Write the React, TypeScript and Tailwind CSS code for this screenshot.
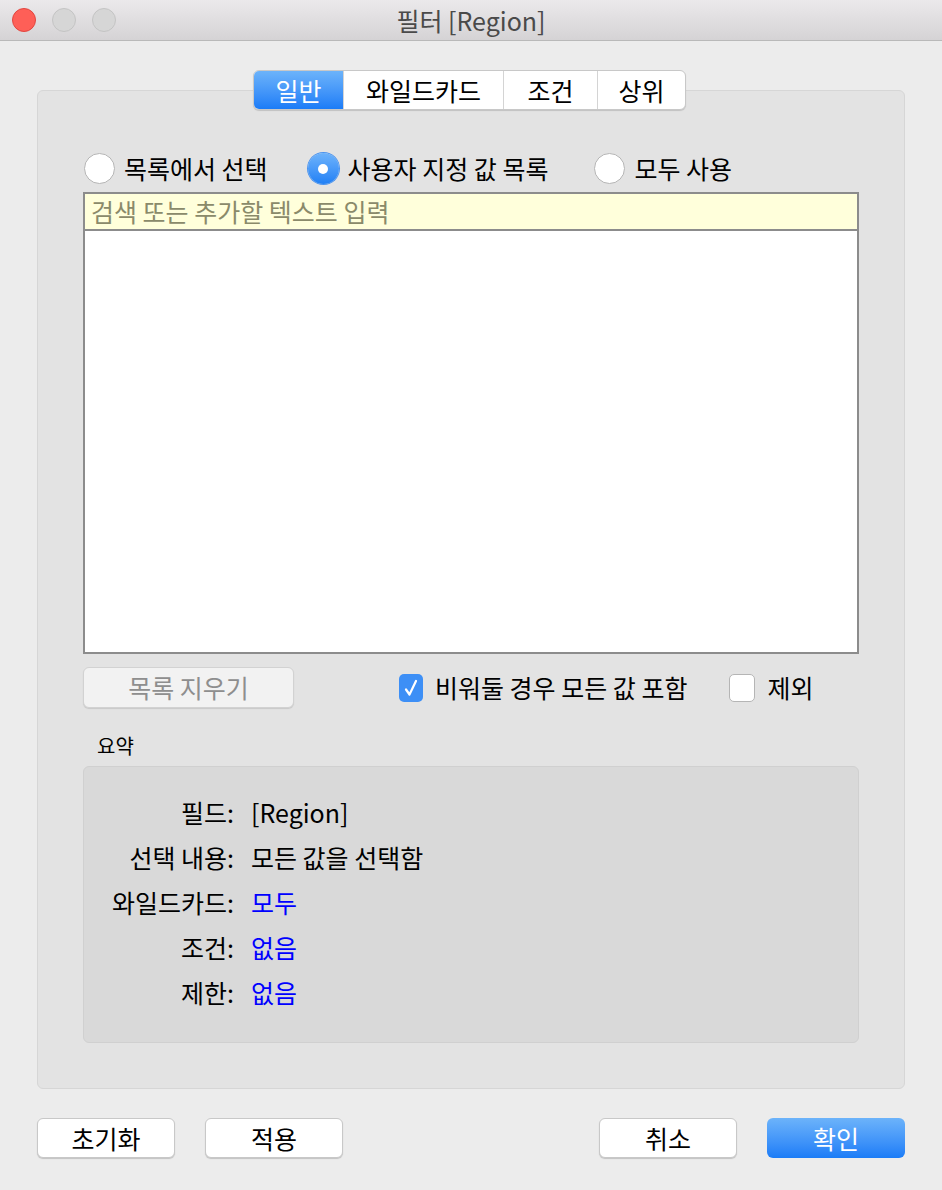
import { useState } from 'react';

const FONT = { fontFamily: '"Noto Sans CJK KR", "Noto Sans", sans-serif' };

const TABS = ['일반', '와일드카드', '조건', '상위'];

const SUMMARY: { label: string; value: string; blue?: boolean }[] = [
  { label: '필드:', value: '[Region]' },
  { label: '선택 내용:', value: '모든 값을 선택함' },
  { label: '와일드카드:', value: '모두', blue: true },
  { label: '조건:', value: '없음', blue: true },
  { label: '제한:', value: '없음', blue: true },
];

function Radio({ checked, label }: { checked?: boolean; label: string }) {
  return (
    <label className="flex items-center gap-[9px] cursor-default">
      {checked ? (
        <span className="flex h-[31px] w-[31px] items-center justify-center rounded-full bg-gradient-to-b from-[#6db3fb] to-[#1f80f5] shadow-[0_0_0_1px_#4a93ef]">
          <span className="h-[10px] w-[10px] rounded-full bg-white" />
        </span>
      ) : (
        <span className="h-[31px] w-[31px] rounded-full border border-[#b5b5b5] bg-white" />
      )}
      <span className="leading-none">{label}</span>
    </label>
  );
}

function Checkbox({ checked, label }: { checked?: boolean; label: string }) {
  return (
    <label className="flex items-center gap-[12px] cursor-default">
      {checked ? (
        <span className="flex h-[28px] w-[24px] items-center justify-center rounded-[5px] bg-[#3d8ff6]">
          <svg width="14" height="18" viewBox="0 0 14 18" fill="none">
            <path d="M2 10.5 L5.5 15.5 L12 2" stroke="white" strokeWidth="2.2" strokeLinecap="round" strokeLinejoin="round" />
          </svg>
        </span>
      ) : (
        <span className="h-[28px] w-[26px] rounded-[5px] border border-[#b5b5b5] bg-white" />
      )}
      <span className="leading-none">{label}</span>
    </label>
  );
}

function DialogButton({ label, primary }: { label: string; primary?: boolean }) {
  return (
    <button
      className={`h-[40px] w-[138px] rounded-[6px] text-[25px] leading-none ${
        primary
          ? 'bg-gradient-to-b from-[#6cb3fa] to-[#1a7cf7] text-white'
          : 'border border-[#c8c8c8] bg-white text-black shadow-[0_1px_1px_rgba(0,0,0,0.18)]'
      }`}
    >
      {label}
    </button>
  );
}

export default function App() {
  const [tab, setTab] = useState(0);

  return (
    <div className="flex h-[1190px] w-[942px] flex-col bg-[#ececec] text-[25px] text-black" style={FONT}>
      {/* title bar */}
      <div className="relative flex h-[41px] items-center justify-center border-b border-[#b9b9b9] bg-gradient-to-b from-[#ebe9eb] to-[#d5d3d5]">
        <div className="absolute left-[12px] top-[8px] flex gap-[16px]">
          <span className="h-[24px] w-[24px] rounded-full border border-[#e2463f] bg-[#fe5f57]" />
          <span className="h-[24px] w-[24px] rounded-full border border-[#c4c4c4] bg-[#d6d6d6]" />
          <span className="h-[24px] w-[24px] rounded-full border border-[#c4c4c4] bg-[#d6d6d6]" />
        </div>
        <span className="text-[25px] leading-none text-[#4a4a4a]">필터 [Region]</span>
      </div>

      {/* group box */}
      <div className="relative mx-[37px] mt-[49px] flex h-[999px] flex-col rounded-[6px] border border-[#d6d6d6] bg-[#e3e3e3] px-[45px]">
        <div className="absolute left-[215px] top-[-21px] flex h-[40px] overflow-hidden rounded-[6px] border border-[#c8c8c8] bg-white shadow-[0_1px_1px_rgba(0,0,0,0.15)]">
          {TABS.map((t, i) => (
            <button
              key={t}
              onClick={() => setTab(i)}
              className={`flex h-full items-center justify-center text-[25px] leading-none ${
                i > 0 ? 'border-l border-[#d4d4d4]' : ''
              } ${tab === i ? 'bg-gradient-to-b from-[#6cb3fa] to-[#1a7cf7] text-white' : 'text-black'} ${
                i === 0 ? 'w-[89px]' : i === 1 ? 'w-[160px]' : i === 2 ? 'w-[94px]' : 'w-[88px]'
              }`}
            >
              {t}
            </button>
          ))}
        </div>

        <div className="mt-[61px] flex h-[33px] items-center pl-[1px]">
          <Radio label="목록에서 선택" />
          <div className="ml-[40px]">
            <Radio checked label="사용자 지정 값 목록" />
          </div>
          <div className="ml-[46px]">
            <Radio label="모두 사용" />
          </div>
        </div>

        <div className="mt-[7px] flex h-[462px] flex-col border-2 border-[#8c8c8c] bg-white">
          <div className="flex h-[37px] items-center border-b-2 border-[#8c8c8c] bg-[#ffffdb] px-[6px] leading-none text-[#8a8a6a]">
            검색 또는 추가할 텍스트 입력
          </div>
          <div className="flex-1" />
        </div>

        <div className="mt-[13px] flex items-center">
          <button className="h-[41px] w-[211px] rounded-[6px] border border-[#d2d2d2] bg-[#f2f2f2] text-[25px] leading-none text-[#8e8e8e] shadow-[0_1px_1px_rgba(0,0,0,0.12)]">
            목록 지우기
          </button>
          <div className="ml-[105px]">
            <Checkbox checked label="비워둘 경우 모든 값 포함" />
          </div>
          <div className="ml-[42px]">
            <Checkbox label="제외" />
          </div>
        </div>

        <div className="mt-[26px] pl-[14px] text-[20px] leading-[24px]">요약</div>

        <div className="mt-[8px] flex h-[277px] flex-col gap-[13px] rounded-[6px] border border-[#d0d0d0] bg-[#d9d9d9] pt-[29px]">
          {SUMMARY.map((r) => (
            <div key={r.label} className="flex h-[32px] items-center leading-none">
              <span className="w-[150px] text-right">{r.label}</span>
              <span className={`ml-[17px] ${r.blue ? 'text-[#0000ff]' : ''}`}>{r.value}</span>
            </div>
          ))}
        </div>
      </div>

      {/* dialog buttons */}
      <div className="mx-[37px] mt-[29px] flex gap-[30px]">
        <DialogButton label="초기화" />
        <DialogButton label="적용" />
        <div className="flex-1" />
        <DialogButton label="취소" />
        <DialogButton primary label="확인" />
      </div>
    </div>
  );
}
